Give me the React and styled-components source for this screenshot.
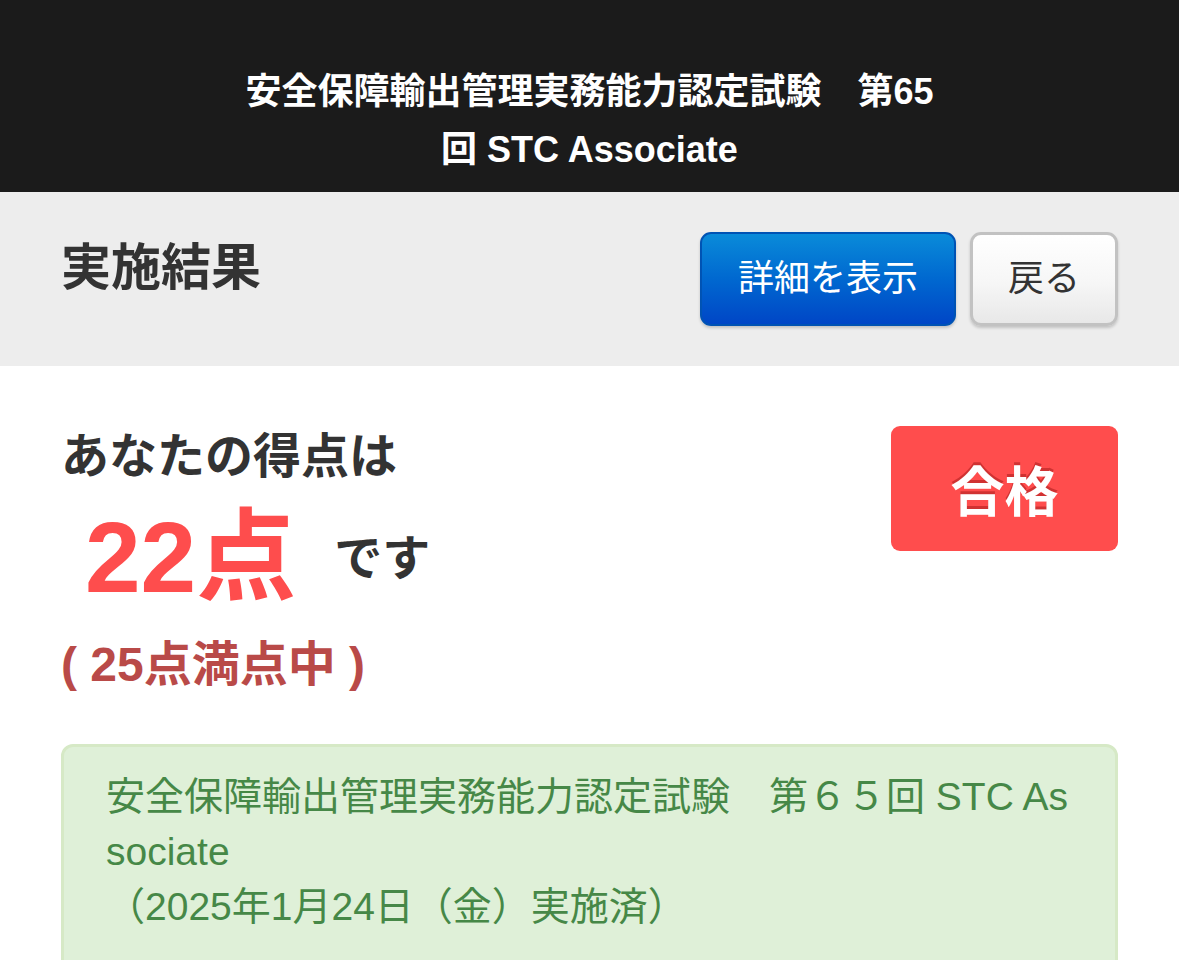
import React from "react";
import styled, { createGlobalStyle } from "styled-components";

const GlobalStyle = createGlobalStyle`
  html, body {
    margin: 0;
    padding: 0;
    background: #ffffff;
  }
  body {
    font-family: "Liberation Sans", "Noto Sans CJK JP", sans-serif;
    color: #333333;
  }
`;

function App() {
  return (
    <>
      <GlobalStyle />
      <Page>
        <Header>
          <HeaderTitle>安全保障輸出管理実務能力認定試験　第65回 STC Associate</HeaderTitle>
        </Header>

        <TitleBar>
          <PageTitle>実施結果</PageTitle>
          <ButtonGroup>
            <Button primary>詳細を表示</Button>
            <Button>戻る</Button>
          </ButtonGroup>
        </TitleBar>

        <Main>
          <ResultRow>
            <ScoreBlock>
              <ScoreLead>あなたの得点は</ScoreLead>
              <ScoreLine>
                <Score>22点</Score>
                <ScoreTail>です</ScoreTail>
              </ScoreLine>
              <ScoreMax>( 25点満点中 )</ScoreMax>
            </ScoreBlock>
            <PassBadge>合格</PassBadge>
          </ResultRow>

          <InfoBox>
            安全保障輸出管理実務能力認定試験　第６５回 STC Associate
            <br />
            （2025年1月24日（金）実施済）
          </InfoBox>
        </Main>
      </Page>
    </>
  );
}

const Page = styled.div`
  width: 100%;
  min-height: 960px;
  background: #ffffff;
`;

const Header = styled.header`
  background: #1b1b1b;
  height: 192px;
  box-sizing: border-box;
  padding: 63px 0 0;
`;

const HeaderTitle = styled.h1`
  margin: 0 auto;
  max-width: 700px;
  color: #ffffff;
  font-size: 36px;
  font-weight: bold;
  line-height: 58px;
  text-align: center;
`;

const TitleBar = styled.div`
  background: #ededed;
  height: 174px;
  box-sizing: border-box;
  padding: 40px 61px;
  display: flex;
  justify-content: space-between;
  align-items: flex-start;
`;

const PageTitle = styled.h2`
  margin: 1px 0 0;
  font-size: 50px;
  font-weight: bold;
  line-height: 70px;
  color: #333333;
`;

const ButtonGroup = styled.div`
  display: flex;
  gap: 14px;
`;

const Button = styled.button`
  height: 94px;
  box-sizing: border-box;
  padding: 0 ${(p) => (p.primary ? "36px" : "35px")};
  border-radius: 11px;
  font-family: "Liberation Sans", "Noto Sans CJK JP", sans-serif;
  font-size: 36px;
  line-height: 1;
  cursor: pointer;
  border: ${(p) => (p.primary ? "2px solid #0053b4" : "3px solid #c2c2c2")};
  color: ${(p) => (p.primary ? "#ffffff" : "#333333")};
  background: ${(p) =>
    p.primary
      ? "linear-gradient(to bottom, #0a8bd9 0%, #0068d0 50%, #0046c6 100%)"
      : "linear-gradient(to bottom, #ffffff 0%, #f6f6f6 55%, #e8e8e8 100%)"};
  box-shadow: 0 2px 3px rgba(0, 0, 0, 0.18);
`;

const Main = styled.main`
  padding: 60px 61px 0;
`;

const ResultRow = styled.div`
  display: flex;
  justify-content: space-between;
  align-items: flex-start;
`;

const ScoreBlock = styled.div`
  display: flex;
  flex-direction: column;
`;

const ScoreLead = styled.div`
  font-size: 48px;
  font-weight: bold;
  line-height: 62px;
  color: #333333;
`;

const ScoreLine = styled.div`
  display: flex;
  align-items: baseline;
  padding-left: 24px;
  margin-top: 16px;
  height: 106px;
`;

const Score = styled.span`
  font-size: 100px;
  font-weight: bold;
  line-height: 106px;
  color: #fe4d4d;
`;

const ScoreTail = styled.span`
  margin-left: 38px;
  font-size: 48px;
  font-weight: bold;
  color: #333333;
  position: relative;
  top: -17px;
`;

const ScoreMax = styled.div`
  margin-top: 22px;
  font-size: 48px;
  font-weight: bold;
  line-height: 66px;
  color: #b94a48;
`;

const PassBadge = styled.div`
  width: 227px;
  height: 125px;
  border-radius: 9px;
  background: #ff4d4d;
  color: #ffffff;
  font-size: 54px;
  font-weight: bold;
  display: flex;
  align-items: center;
  justify-content: center;
  text-shadow: 0 -3px 0 rgba(120, 0, 0, 0.35);
`;

const InfoBox = styled.div`
  margin-top: 46px;
  border: 3px solid #d6e9c6;
  border-radius: 12px;
  background: #dff0d8;
  color: #468847;
  font-size: 39px;
  line-height: 55px;
  padding: 22px 42px 80px;
  word-break: break-all;
`;

export default App;
